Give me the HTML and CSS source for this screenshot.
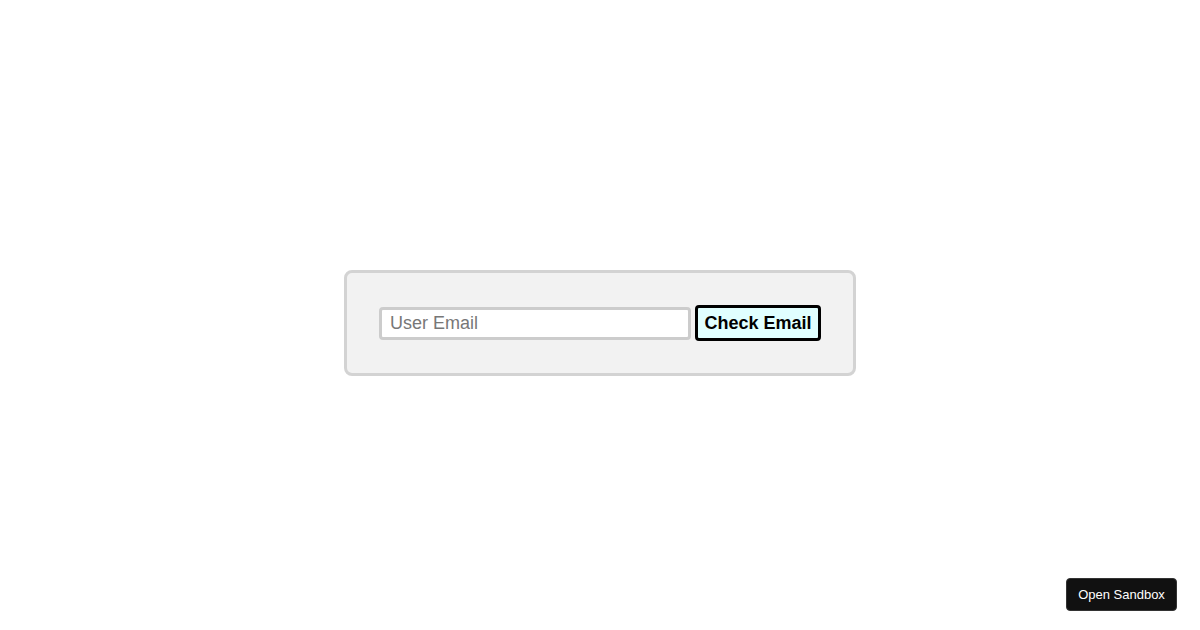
FILE: index.html
```html
<!DOCTYPE html>
<html>
<head>
<meta charset="utf-8">
<link rel="stylesheet" href="styles.css">
</head>
<body>
<div class="card">
  <input class="email" type="text" placeholder="User Email">
  <button class="check">Check Email</button>
</div>
<a class="sandbox">Open Sandbox</a>
</body>
</html>
```

FILE: styles.css
```css
html, body { background: #fff; }
body {
  margin: 8px;
  min-height: 100vh;
  display: flex;
  align-items: center;
  justify-content: center;
  font-family: "Liberation Sans", Arial, sans-serif;
}
.card {
  width: 442px;
  padding: 32px;
  border: 3px solid #d3d3d3;
  border-radius: 8px;
  background: #f2f2f2;
  display: flex;
  align-items: center;
  gap: 4px;
}
.email {
  box-sizing: border-box;
  width: 312px;
  height: 33px;
  border: 3px solid #cccccc;
  border-radius: 4px;
  padding: 0 8px;
  font-family: "Liberation Sans", Arial, sans-serif;
  font-size: 18px;
  background: #fff;
  outline: none;
}
.email::placeholder { color: #777; }
.check {
  box-sizing: border-box;
  width: 126px;
  height: 36px;
  border: 3px solid #000;
  border-radius: 4px;
  background: #e0ffff;
  font-family: "Liberation Sans", Arial, sans-serif;
  font-weight: bold;
  font-size: 18px;
  color: #000;
  padding: 0;
}
.sandbox {
  position: fixed;
  right: 23px;
  bottom: 19px;
  width: 111px;
  height: 33px;
  box-sizing: border-box;
  background: #111;
  border: 1px solid #333;
  border-radius: 4px;
  color: #fff;
  font-size: 13px;
  display: flex;
  align-items: center;
  justify-content: center;
}
```
